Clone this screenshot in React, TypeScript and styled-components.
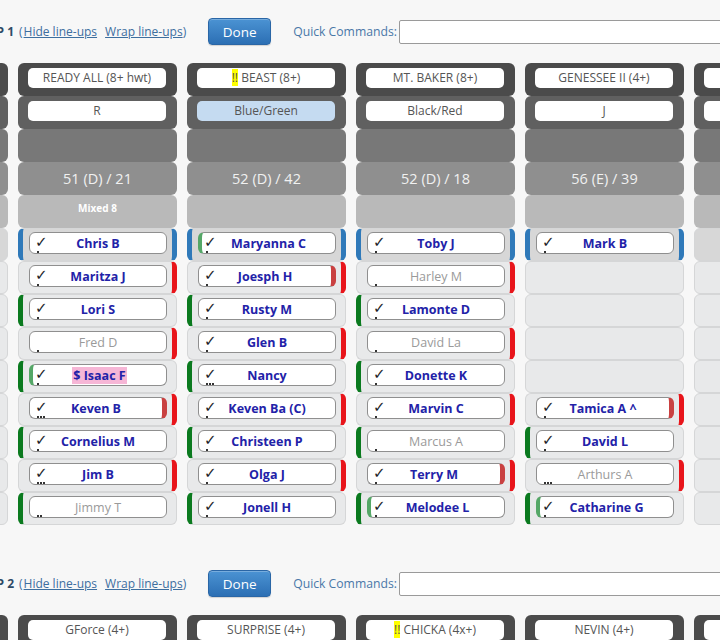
import React from 'react';
import styled, { createGlobalStyle, css } from 'styled-components';

const GlobalStyle = createGlobalStyle`
  html, body { margin: 0; padding: 0; background: #f7f7f7; overflow: hidden; }
  body { font-family: "Open Sans", "Liberation Sans", sans-serif; width: 720px; height: 640px; }
`;

const BLUE = '#2f79b9';
const GREEN = '#0b7a1f';
const RED = '#e8151b';

type Player = {
  name: string;
  left?: string;
  right?: string;
  innerLeft?: boolean;
  innerRight?: boolean;
  checked?: boolean;
  dots?: number;
  highlight?: boolean;
};

type Slot = Player | { empty: true; left?: string; right?: string };

type Team = {
  name: string;
  alert?: boolean;
  color: string;
  colorBg?: string;
  stats: string;
  note: string;
  slots: Slot[];
};

const emptySlots = (n: number): Slot[] => Array.from({ length: n }, () => ({ empty: true as const }));

const group1: Team[] = [
  { name: '', color: '', stats: '', note: '', slots: emptySlots(9) },
  {
    name: 'READY ALL (8+ hwt)', color: 'R', stats: '51 (D) / 21', note: 'Mixed 8',
    slots: [
      { name: 'Chris B', left: BLUE, right: BLUE, checked: true, dots: 1 },
      { name: 'Maritza J', right: RED, checked: true, dots: 1 },
      { name: 'Lori S', left: GREEN, checked: true, dots: 1 },
      { name: 'Fred D', right: RED, dots: 1 },
      { name: '$ Isaac F', left: GREEN, innerLeft: true, checked: true, dots: 1, highlight: true },
      { name: 'Keven B', right: RED, innerRight: true, checked: true, dots: 3 },
      { name: 'Cornelius M', left: GREEN, checked: true, dots: 1 },
      { name: 'Jim B', right: RED, checked: true, dots: 3 },
      { name: 'Jimmy T', left: GREEN, dots: 2 },
    ],
  },
  {
    name: 'BEAST (8+)', alert: true, color: 'Blue/Green', colorBg: '#c5dbf1', stats: '52 (D) / 42', note: '',
    slots: [
      { name: 'Maryanna C', left: BLUE, right: BLUE, innerLeft: true, checked: true, dots: 1 },
      { name: 'Joesph H', right: RED, innerRight: true, checked: true, dots: 1 },
      { name: 'Rusty M', left: GREEN, checked: true, dots: 1 },
      { name: 'Glen B', right: RED, checked: true, dots: 1 },
      { name: 'Nancy', left: GREEN, checked: true, dots: 3 },
      { name: 'Keven Ba (C)', right: RED, checked: true, dots: 1 },
      { name: 'Christeen P', left: GREEN, checked: true, dots: 1 },
      { name: 'Olga J', right: RED, checked: true, dots: 1 },
      { name: 'Jonell H', left: GREEN, checked: true, dots: 1 },
    ],
  },
  {
    name: 'MT. BAKER (8+)', color: 'Black/Red', stats: '52 (D) / 18', note: '',
    slots: [
      { name: 'Toby J', left: BLUE, right: BLUE, checked: true, dots: 1 },
      { name: 'Harley M', right: RED, dots: 1 },
      { name: 'Lamonte D', left: GREEN, checked: true, dots: 1 },
      { name: 'David La', right: RED, dots: 1 },
      { name: 'Donette K', left: GREEN, checked: true, dots: 1 },
      { name: 'Marvin C', right: RED, checked: true, dots: 1 },
      { name: 'Marcus A', left: GREEN, dots: 1 },
      { name: 'Terry M', right: RED, innerRight: true, checked: true, dots: 1 },
      { name: 'Melodee L', left: GREEN, innerLeft: true, checked: true, dots: 1 },
    ],
  },
  {
    name: 'GENESSEE II (4+)', color: 'J', stats: '56 (E) / 39', note: '',
    slots: [
      { name: 'Mark B', left: BLUE, right: BLUE, checked: true, dots: 1 },
      { empty: true },
      { empty: true },
      { empty: true },
      { empty: true },
      { name: 'Tamica A ^', right: RED, innerRight: true, checked: true, dots: 1 },
      { name: 'David L', left: GREEN, checked: true, dots: 1 },
      { name: 'Arthurs A', right: RED, dots: 3 },
      { name: 'Catharine G', left: GREEN, innerLeft: true, checked: true, dots: 1 },
    ],
  },
  { name: '', color: '', stats: '', note: '', slots: emptySlots(9) },
];

const group2: Team[] = [
  { name: '', color: '', stats: '', note: '', slots: [] },
  { name: 'GForce (4+)', color: '', stats: '', note: '', slots: [] },
  { name: 'SURPRISE (4+)', color: '', stats: '', note: '', slots: [] },
  { name: 'CHICKA (4x+)', alert: true, color: '', stats: '', note: '', slots: [] },
  { name: 'NEVIN (4+)', color: '', stats: '', note: '', slots: [] },
  { name: '', color: '', stats: '', note: '', slots: [] },
];

const Page = styled.div`
  padding-top: 18px;
`;

const Group = styled.section<{ $spaced?: boolean }>`
  display: flex;
  flex-direction: column;
  margin-top: ${(p) => (p.$spaced ? '45px' : '0')};
`;

const Toolbar = styled.div`
  display: flex;
  align-items: center;
  height: 27px;
  font-size: 12px;
  white-space: nowrap;
  & > * { flex-shrink: 0; }
`;

const GroupLabel = styled.div`
  width: 14px;
  display: flex;
  justify-content: flex-end;
  font-weight: 700;
  color: #2f4a66;
`;

const Links = styled.span`
  color: #3d6e9f;
  margin-left: 5px;
`;

const Link = styled.a<{ $gap?: boolean }>`
  color: #3d6e9f;
  text-decoration: underline;
  margin-left: ${(p) => (p.$gap ? '8px' : '1px')};
  cursor: pointer;
`;

const DoneButton = styled.button`
  margin-left: 22px;
  width: 63px;
  height: 27px;
  box-sizing: border-box;
  border: 1px solid #2a66a6;
  border-radius: 4px;
  background: linear-gradient(#4b93d3, #2c6fb4);
  box-shadow: inset 0 1px 0 rgba(255, 255, 255, 0.25), 0 1px 1px rgba(0, 0, 0, 0.15);
  color: #fff;
  font-family: "Open Sans", "Liberation Sans", sans-serif;
  font-size: 13.5px;
  padding: 0;
`;

const QuickLabel = styled.span`
  margin-left: 22px;
  color: #4a78a8;
  font-size: 12.2px;
`;

const QuickInput = styled.input`
  margin-left: 2px;
  width: 420px;
  height: 24px;
  box-sizing: border-box;
  border: 1px solid #9a9a9a;
  border-radius: 2px;
  background: #fff;
`;

const Board = styled.div`
  display: grid;
  grid-template-columns: repeat(6, 159px);
  column-gap: 10px;
  margin-left: -151px;
  margin-top: 18px;
`;

const Column = styled.div`
  display: flex;
  flex-direction: column;
`;

const shades = ['#4b4b4b', '#606060', '#787878', '#8f8f8f', '#b9b9b9'];

const HeadCell = styled.div<{ $shade: number }>`
  height: 33px;
  box-sizing: border-box;
  border-radius: 6px;
  background: ${(p) => shades[p.$shade]};
  padding: 5px 11px 0 10px;
`;

const Pill = styled.div<{ $bg?: string }>`
  height: 20px;
  border-radius: 5px;
  background: ${(p) => p.$bg || '#fff'};
  color: #555;
  font-size: 12px;
  line-height: 20px;
  text-align: center;
  white-space: nowrap;
  overflow: hidden;
`;

const Alert = styled.span`
  background: #ffff00;
  color: #555;
`;

const StatsCell = styled(HeadCell)`
  padding: 0;
  display: flex;
  align-items: center;
  justify-content: center;
  color: #f1f1f1;
  font-size: 14.5px;
`;

const NoteCell = styled(HeadCell)`
  padding: 6px 0 0;
  text-align: center;
  color: #fff;
  font-size: 10px;
  font-weight: 700;
`;

const SlotCell = styled.div<{ $left?: string; $right?: string; $first?: boolean }>`
  height: 33px;
  box-sizing: border-box;
  border-radius: 6px;
  background: ${(p) => (p.$first ? '#d7d7d7' : '#e8e9ea')};
  border: 1px solid #d5d6d7;
  ${(p) => p.$left && css`border-left: 5px solid ${p.$left};`}
  ${(p) => p.$right && css`border-right: 5px solid ${p.$right};`}
  padding: 3px ${(p) => (p.$right ? 5 : 9)}px 0 ${(p) => (p.$left ? 6 : 10)}px;
`;

const NameBox = styled.div<{ $innerLeft?: boolean; $innerRight?: boolean }>`
  position: relative;
  height: 22px;
  box-sizing: border-box;
  background: #fff;
  border: 1px solid #8f8f8f;
  border-radius: 6px;
  ${(p) => p.$innerLeft && css`border-left: 4px solid #55a767;`}
  ${(p) => p.$innerRight && css`border-right: 5px solid #c94141;`}
  display: flex;
  align-items: center;
  justify-content: center;
`;

const Check = styled.span<{ $shift?: boolean }>`
  position: absolute;
  left: ${(p) => (p.$shift ? 2 : 5)}px;
  top: 1px;
  font-family: "DejaVu Sans", sans-serif;
  font-size: 15px;
  line-height: 16px;
  color: #1e1e28;
`;

const Dots = styled.span<{ $shift?: boolean }>`
  position: absolute;
  left: ${(p) => (p.$shift ? 4 : 7)}px;
  bottom: 0;
  display: flex;
  gap: 1px;
`;

const Dot = styled.span`
  width: 2px;
  height: 2px;
  background: #333;
`;

const Name = styled.span<{ $active?: boolean; $highlight?: boolean }>`
  font-size: 12.5px;
  font-weight: ${(p) => (p.$active ? 700 : 400)};
  color: ${(p) => (p.$active ? '#2222a8' : '#9a9a9a')};
  background: ${(p) => (p.$highlight ? '#f6b6d6' : 'transparent')};
  padding: 0 ${(p) => (p.$highlight ? '1px' : '0')};
  white-space: nowrap;
`;

const SlotView: React.FC<{ slot: Slot; first: boolean }> = ({ slot, first }) => {
  if ('empty' in slot) {
    return <SlotCell $first={first} $left={slot.left} $right={slot.right} />;
  }
  return (
    <SlotCell $first={first} $left={slot.left} $right={slot.right}>
      <NameBox $innerLeft={slot.innerLeft} $innerRight={slot.innerRight}>
        {slot.checked && <Check $shift={slot.innerLeft}>✓</Check>}
        <Dots $shift={slot.innerLeft}>
          {Array.from({ length: slot.dots || 0 }, (_, i) => (
            <Dot key={i} />
          ))}
        </Dots>
        <Name $active={slot.checked} $highlight={slot.highlight}>
          {slot.name}
        </Name>
      </NameBox>
    </SlotCell>
  );
};

const TeamColumn: React.FC<{ team: Team }> = ({ team }) => (
  <Column>
    <HeadCell $shade={0}>
      <Pill>
        {team.alert && <Alert>!!</Alert>}
        {team.alert && ' '}
        {team.name}
      </Pill>
    </HeadCell>
    <HeadCell $shade={1}>
      <Pill $bg={team.colorBg}>{team.color}</Pill>
    </HeadCell>
    <HeadCell $shade={2} />
    <StatsCell $shade={3}>{team.stats}</StatsCell>
    <NoteCell $shade={4}>{team.note}</NoteCell>
    {team.slots.map((s, i) => (
      <SlotView key={i} slot={s} first={i === 0} />
    ))}
  </Column>
);

const GroupBar: React.FC<{ label: string }> = ({ label }) => (
  <Toolbar>
    <GroupLabel>{label}</GroupLabel>
    <Links>
      (<Link>Hide line-ups</Link>
      <Link $gap>Wrap line-ups</Link>)
    </Links>
    <DoneButton>Done</DoneButton>
    <QuickLabel>Quick Commands:</QuickLabel>
    <QuickInput />
  </Toolbar>
);

export default function App() {
  return (
    <>
      <GlobalStyle />
      <Page>
        <Group>
          <GroupBar label="GROUP 1" />
          <Board>
            {group1.map((t, i) => (
              <TeamColumn key={i} team={t} />
            ))}
          </Board>
        </Group>
        <Group $spaced>
          <GroupBar label="GROUP 2" />
          <Board>
            {group2.map((t, i) => (
              <TeamColumn key={i} team={t} />
            ))}
          </Board>
        </Group>
      </Page>
    </>
  );
}
